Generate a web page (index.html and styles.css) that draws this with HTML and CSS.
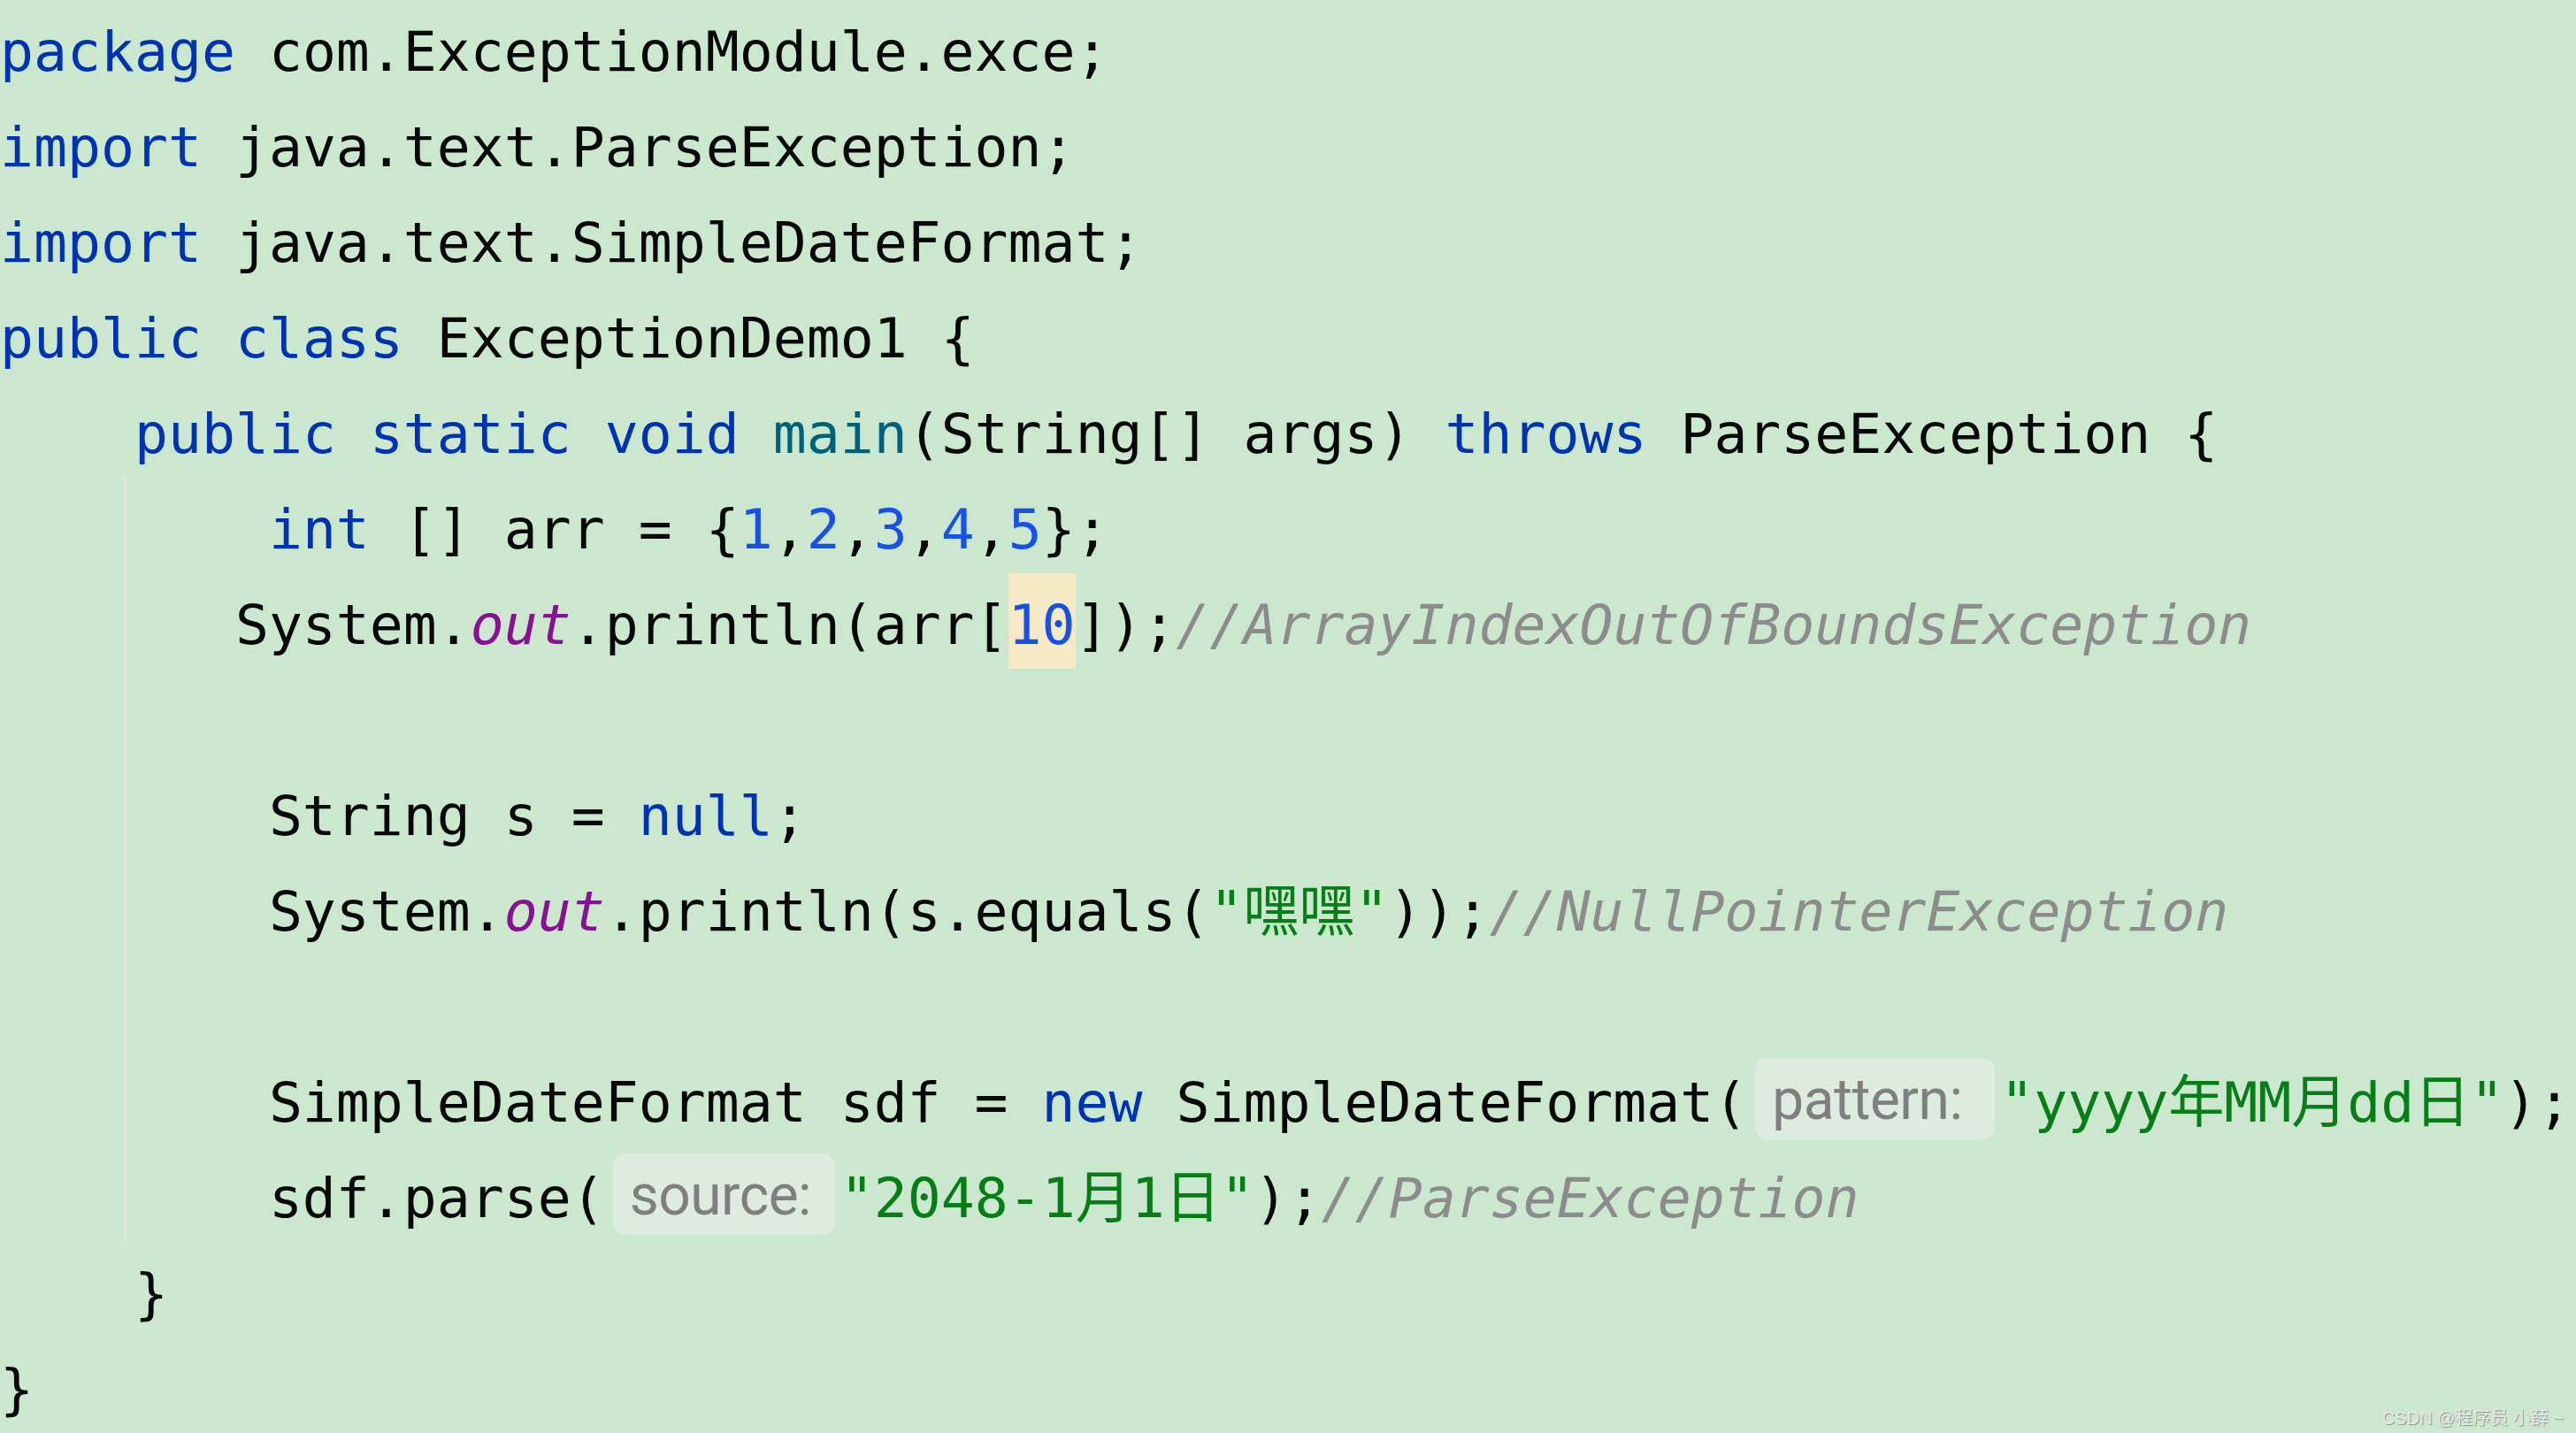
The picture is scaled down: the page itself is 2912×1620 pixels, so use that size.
FILE: index.html
```html
<!DOCTYPE html>
<html lang="zh">
<head>
<meta charset="utf-8">
<title>ExceptionDemo1</title>
<link rel="stylesheet" href="styles.css">
</head>
<body>
<main class="editor">
<div class="ln"><span class="kw">package</span> com.ExceptionModule.exce;</div>
<div class="ln"><span class="kw">import</span> java.text.ParseException;</div>
<div class="ln"><span class="kw">import</span> java.text.SimpleDateFormat;</div>
<div class="ln"><span class="kw">public</span> <span class="kw">class</span> ExceptionDemo1 {</div>
<div class="ln">    <span class="kw">public</span> <span class="kw">static</span> <span class="kw">void</span> <span class="fn">main</span>(String[] args) <span class="kw">throws</span> ParseException {</div>
<div class="body">
<div class="ln">        <span class="kw">int</span> [] arr = {<span class="num">1</span>,<span class="num">2</span>,<span class="num">3</span>,<span class="num">4</span>,<span class="num">5</span>};</div>
<div class="ln">       System.<span class="fld">out</span>.println(arr[<span class="num hl">10</span>]);<span class="cmt">//ArrayIndexOutOfBoundsException</span></div>
<div class="ln"> </div>
<div class="ln">        String s = <span class="kw">null</span>;</div>
<div class="ln">        System.<span class="fld">out</span>.println(s.equals(<span class="str">"嘿嘿"</span>));<span class="cmt">//NullPointerException</span></div>
<div class="ln"> </div>
<div class="ln">        SimpleDateFormat sdf = <span class="kw">new</span> SimpleDateFormat(<span class="hint hint-pattern">pattern:</span><span class="str">"yyyy年MM月dd日"</span>);</div>
<div class="ln">        sdf.parse(<span class="hint hint-source">source:</span><span class="str">"2048-1月1日"</span>);<span class="cmt">//ParseException</span></div>
</div>
<div class="ln">    }</div>
<div class="ln">}</div>
</main>
<div class="watermark">CSDN @程序员 小薛 ~</div>
</body>
</html>
```

FILE: styles.css
```css
html, body {
  margin: 0;
  padding: 0;
  width: 2912px;
  height: 1620px;
  overflow: hidden;
  background: #cbe8ce;
}

body {
  position: relative;
}

.editor {
  display: block;
  font-family: "DejaVu Sans Mono", "Noto Sans CJK SC", monospace;
  font-size: 63.1px;
  color: #080808;
}

.ln {
  height: 104px;
  padding-top: 4px;
  line-height: 108px;
  white-space: pre;
}

.body {
  background-image: linear-gradient(to right,
    transparent 140px, #e2e6e2 140px, #e2e6e2 143px, transparent 143px);
}

.kw { color: #0033b3; }
.fn { color: #00627a; }
.num { color: #1750eb; }
.str { color: #067d17; }
.fld { color: #871094; font-style: italic; }
.cmt { color: #8c8c8c; font-style: italic; }

.hl {
  background: #f6e9c6;
  padding-top: 21.4px;
  padding-bottom: 13.1px;
}

.hint {
  display: inline-block;
  vertical-align: 3px;
  box-sizing: border-box;
  height: 92px;
  padding: 3.6px 0 0 19px;
  line-height: 88.4px;
  border-radius: 14px;
  background: #ddecde;
  color: #7f7f7f;
  font-family: "Roboto", "Liberation Sans", sans-serif;
  font-size: 64px;
  letter-spacing: -0.5px;
  margin: 0 6px 0 9px;
  text-align: left;
}

.hint-pattern { width: 271px; }
.hint-source { width: 251px; }

.watermark {
  position: absolute;
  right: 14px;
  bottom: 4px;
  font-family: "Liberation Sans", "Noto Sans CJK SC", sans-serif;
  font-size: 20px;
  color: #e6ece6;
  text-shadow: 1px 1px 1px #8a8a8a;
  white-space: pre;
}
```
